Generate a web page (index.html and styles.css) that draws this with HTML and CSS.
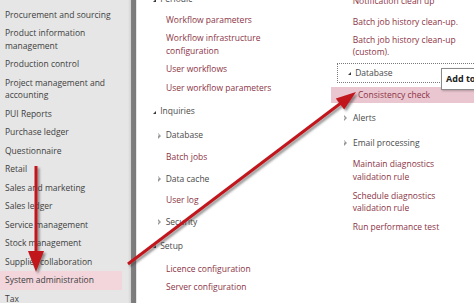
FILE: index.html
```html
<!DOCTYPE html>
<html lang="en">
<head>
    <meta charset="UTF-8">
    <title>System administration</title>
    <link rel="stylesheet" href="styles.css">
</head>
<body>
    <div class="page">
        <div class="nav">
            <div class="nav-item">Procurement and sourcing</div>
            <div class="nav-item">Product information<br>management</div>
            <div class="nav-item">Production control</div>
            <div class="nav-item">Project management and<br>accounting</div>
            <div class="nav-item">PUI Reports</div>
            <div class="nav-item">Purchase ledger</div>
            <div class="nav-item">Questionnaire</div>
            <div class="nav-item">Retail</div>
            <div class="nav-item">Sales and marketing</div>
            <div class="nav-item">Sales ledger</div>
            <div class="nav-item">Service management</div>
            <div class="nav-item">Stock management</div>
            <div class="nav-item">Supplier collaboration</div>
            <div class="nav-item selected">System administration</div>
            <div class="nav-item">Tax</div>
        </div>
        <div class="divider"></div>

        <div class="area area-middle">
            <div class="group periodic">
                <div class="group-header"><span class="open"></span>Periodic</div>
                <div class="link">Workflow parameters</div>
                <div class="link">Workflow infrastructure<br>configuration</div>
                <div class="link">User workflows</div>
                <div class="link">User workflow parameters</div>
            </div>
            <div class="group inquiries">
                <div class="group-header"><span class="open"></span>Inquiries</div>
                <div class="folder"><span class="closed"></span>Database</div>
                <div class="link">Batch jobs</div>
                <div class="folder"><span class="closed"></span>Data cache</div>
                <div class="link">User log</div>
                <div class="folder"><span class="closed"></span>Security</div>
            </div>
            <div class="group">
                <div class="group-header"><span class="open"></span>Setup</div>
                <div class="link">Licence configuration</div>
                <div class="link">Server configuration</div>
            </div>
        </div>

        <div class="area area-right">
            <div class="link">Notification clean up</div>
            <div class="link batch-first">Batch job history clean-up.</div>
            <div class="link batch-custom">Batch job history clean-up<br>(custom).</div>
            <div class="subfolder"><span class="open"></span>Database</div>
            <div class="sublink selected">Consistency check</div>
            <div class="folder alerts"><span class="closed"></span>Alerts</div>
            <div class="folder email"><span class="closed"></span>Email processing</div>
            <div class="link maintain">Maintain diagnostics<br>validation rule</div>
            <div class="link schedule">Schedule diagnostics<br>validation rule</div>
            <div class="link">Run performance test</div>
        </div>
    </div>

    <svg class="arrows" width="474" height="303" viewBox="0 0 474 303">
        <defs>
            <filter id="shadow" x="-20%" y="-20%" width="140%" height="140%">
                <feDropShadow dx="2" dy="2" stdDeviation="1" flood-color="#404040" flood-opacity="0.55"/>
            </filter>
        </defs>
        <g filter="url(#shadow)" fill="#c0141e" stroke="#c0141e">
            <line x1="36" y1="166" x2="36" y2="254" stroke-width="3"/>
            <polygon points="28,251 44,251 36,272" stroke="none"/>
            <line x1="128" y1="264" x2="341" y2="103" stroke-width="3"/>
            <polygon points="356,92 344.2,109.6 335.8,98.4" stroke="none"/>
        </g>
    </svg>

    <div class="tooltip">Add to</div>
</body>
</html>
```

FILE: styles.css
```css
body {
    margin: 0;
    font-family: "Open Sans", "Liberation Sans", sans-serif;
    font-size: 8.5px;
    line-height: 12.5px;
    color: #404040;
    background-color: #ffffff;
    overflow: hidden;
}
.page {
    display: flex;
    width: 474px;
    height: 303px;
    overflow: hidden;
}
.nav {
    flex: 0 0 122px;
    padding: 5.75px 6px 0 0;
    background-color: #e6e6e6;
}
.nav-item {
    padding: 3px 0 3px 5px;
    white-space: nowrap;
}
.nav-item.selected {
    background-color: #f2d6dc;
}
.divider {
    flex: 0 0 9px;
    background: linear-gradient(to right, #e6e6e6 0, #d2d2d2 3px, #808080 3px, #7a7a7a 8px, #d8d8d8 8px, #f4f4f4 9px);
}
.area {
    white-space: nowrap;
}
.area-middle {
    flex: 0 0 194px;
    margin-top: -15.75px;
}
.area-right {
    flex: 1;
    margin-top: -7.75px;
}
.group-header {
    display: flex;
    align-items: center;
    padding: 7px 0 7px 15.7px;
    color: #4a4a4a;
}
.periodic .group-header {
    padding-top: 9px;
    padding-bottom: 5px;
}
.inquiries {
    margin-top: 1px;
}
.link {
    padding: 3px 0 3px 29px;
    color: #8c3446;
}
.inquiries .link {
    padding-top: 4.6px;
    padding-bottom: 4.6px;
}
.folder {
    display: flex;
    align-items: center;
    padding: 4.6px 0 4.6px 20.7px;
    color: #4a4a4a;
}
.open {
    width: 0;
    height: 0;
    border-left: 3.5px solid transparent;
    border-bottom: 3.5px solid #3a3a3a;
    margin: 1px 4.5px 0 0;
}
.closed {
    width: 0;
    height: 0;
    border-top: 3.3px solid transparent;
    border-bottom: 3.3px solid transparent;
    border-left: 3.5px solid #9a9a9a;
    margin-right: 5px;
    position: relative;
}
.closed::after {
    content: "";
    position: absolute;
    left: -3px;
    top: -1.6px;
    border-top: 1.6px solid transparent;
    border-bottom: 1.6px solid transparent;
    border-left: 1.8px solid #ffffff;
}

/* right column */
.area-right .link {
    padding-left: 21.7px;
}
.area-right .batch-first {
    margin-top: 2.5px;
}
.area-right .batch-custom {
    margin-top: -1px;
}
.subfolder {
    display: flex;
    align-items: center;
    margin: 1.25px 0 0 6px;
    padding: 2.75px 0 2.75px 9.7px;
    border: 1px dotted #7a7a7a;
    border-right: none;
    color: #4a4a4a;
}
.sublink {
    margin-top: 4px;
    padding: 1.75px 0 1.75px 27px;
    color: #8c3446;
}
.sublink.selected {
    background-color: #eac6d0;
}
.area-right .folder {
    padding-left: 13px;
}
.area-right .folder .closed {
    margin-right: 6px;
}
.alerts {
    margin-top: 4.3px;
}
.email {
    margin-top: 3px;
}
.maintain {
    margin-top: 1.5px;
}
.schedule {
    margin-top: 0.7px;
}

/* overlays */
.arrows {
    position: absolute;
    left: 0;
    top: 0;
    pointer-events: none;
}
.tooltip {
    position: absolute;
    left: 441px;
    top: 68px;
    padding: 3px 10px 3px 4px;
    border: 1px solid #8a8a8a;
    background-color: #ffffff;
    box-shadow: 1px 1px 2px rgba(0,0,0,0.25);
    font-weight: bold;
    font-size: 9px;
    line-height: 14px;
    color: #222;
    white-space: nowrap;
}
```
